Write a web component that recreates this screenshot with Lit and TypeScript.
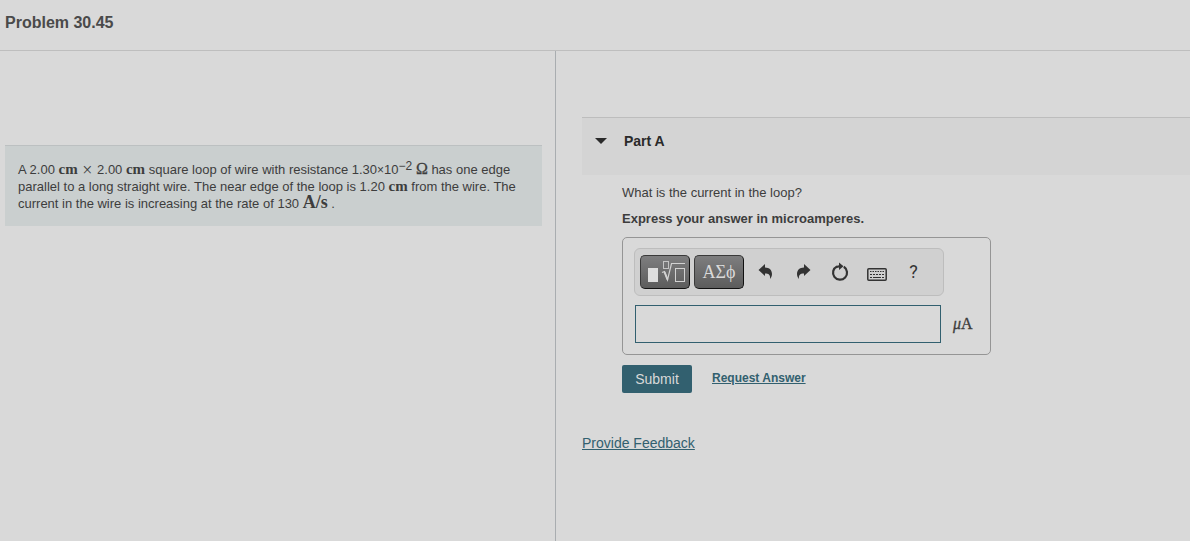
import { LitElement, html, css } from "lit";
import { customElement, state } from "lit/decorators.js";

@customElement("answer-toolbar")
export class AnswerToolbar extends LitElement {
  static styles = css`
    :host {
      display: block;
    }
    .bar {
      display: flex;
      align-items: center;
      box-sizing: border-box;
      width: 310px;
      height: 48px;
      padding: 0 5px;
      border: 1px solid #bdbdbd;
      border-radius: 6px;
      background: #d0d0d0;
    }
    button {
      display: flex;
      align-items: center;
      justify-content: center;
      padding: 0;
      border: 0;
      background: none;
      color: #333;
      cursor: pointer;
    }
    .keys {
      display: flex;
      gap: 4px;
      margin-right: 3px;
    }
    .key {
      box-sizing: border-box;
      width: 50px;
      height: 34px;
      border: 1px solid #111;
      border-top-color: #3a3a3a;
      border-left-color: #3a3a3a;
      border-radius: 5px;
      background: linear-gradient(#7e7e7f, #5c5c5c);
      color: #d9d9d9;
    }
    .greek {
      font: 18px/20px "Liberation Serif", serif;
    }
    .tool {
      width: 37px;
      height: 34px;
    }
    .tools {
      display: flex;
    }
    .help {
      font: 18px/20px Roboto, "Liberation Sans", sans-serif;
    }
  `;

  render() {
    return html`
      <div class="bar" role="toolbar" aria-label="Math input">
        <div class="keys">
          <button class="key" type="button" aria-label="Templates">
            <svg width="40" height="26" viewBox="0 0 40 26" fill="none">
              <rect x="3" y="9" width="10" height="14" fill="#dedede" />
              <rect x="18.500" y="2.500" width="5" height="7" stroke="#c4c4c4" />
              <path d="M17 13.500l2.500-1 3 8.500L26.500 4.500H40" stroke="#d2d2d2" stroke-width="1.200" />
              <path d="M19.500 13l3 7.500" stroke="#d2d2d2" stroke-width="2" />
              <rect x="30.500" y="9.500" width="9" height="13" stroke="#d2d2d2" />
            </svg>
          </button>
          <button class="key greek" type="button" aria-label="Symbols">ΑΣϕ</button>
        </div>
        <div class="tools">
          <button class="tool" type="button" aria-label="Undo">
            <svg width="16" height="18" viewBox="0 0 16 18">
              <path fill="#333" d="M.5 7L7 1v3.500c4.500 0 7 2.800 7 6.500 0 2-.8 3.800-2 5 .5-3.500-.7-5.500-5-5.500V13z" />
            </svg>
          </button>
          <button class="tool" type="button" aria-label="Redo">
            <svg width="16" height="18" viewBox="0 0 16 18">
              <path fill="#333" d="M15.500 7L9 1v3.500c-4.500 0-7 2.800-7 6.500 0 2 .8 3.800 2 5-.5-3.500 .7-5.500 5-5.500V13z" />
            </svg>
          </button>
          <button class="tool" type="button" aria-label="Reset">
            <svg width="18" height="20" viewBox="0 0 18 20" fill="none">
              <path d="M12.800 4.800A7 7 0 1 1 6 4.400" stroke="#333" stroke-width="2.200" />
              <path d="M8 .5l4.500 3.700L8 8V5.500L5.500 6 5 4l3-.8z" fill="#333" />
            </svg>
          </button>
          <button class="tool" type="button" aria-label="Keyboard shortcuts">
            <svg width="20" height="18" viewBox="0 0 20 18" fill="none">
              <rect x=".8" y="5.800" width="18.400" height="11.400" rx="1" stroke="#333" stroke-width="1.500" />
              <path d="M3 8.500h14" stroke="#333" stroke-width="1.200" stroke-dasharray="1.500 1" />
              <path d="M3 11.500h14" stroke="#333" stroke-width="1.200" stroke-dasharray="2 1" />
              <path d="M3 14.500h2M6 14.500h8M15 14.500h2" stroke="#333" stroke-width="1.200" />
            </svg>
          </button>
          <button class="tool help" type="button" aria-label="Help">?</button>
        </div>
      </div>
    `;
  }
}

@customElement("app-root")
export class AppRoot extends LitElement {
  @state() private open = true;

  static styles = css`
    :host {
      display: flex;
      flex-direction: column;
      min-height: 100vh;
      background: #d9d9d9;
      color: #3d3d3d;
      font: 13px/17px "Liberation Sans", Arial, sans-serif;
    }
    h1,
    h2,
    p {
      margin: 0;
    }
    header {
      padding: 13px 5px 17px;
      border-bottom: 1px solid #bebebe;
    }
    h1 {
      font-size: 16px;
      line-height: 20px;
      color: #4a4a4a;
    }
    main {
      display: grid;
      grid-template-columns: 556fr 634fr;
      flex: 1;
    }
    .statement {
      padding: 94px 13px 0 5px;
      border-right: 1px solid #a9adb0;
    }
    .problem {
      padding: 15px 13px 14px;
      border-top: 1px solid #bcc0c1;
      background: #cacfcf;
    }
    .unit,
    .symbol {
      font-family: "Liberation Serif", serif;
      line-height: 0;
    }
    .unit {
      font-size: 15px;
      font-weight: bold;
    }
    .symbol {
      font-size: 16px;
      -webkit-text-stroke: 0.3px;
    }
    .large {
      font-size: 18px;
    }
    .times {
      margin: 0 1px;
      font-family: "Liberation Serif", serif;
      font-size: 18px;
      line-height: 0;
      vertical-align: -2px;
    }
    .small {
      font-size: 12px;
      line-height: 0;
    }
    sup {
      font-size: 12px;
      line-height: 0;
      vertical-align: 4px;
    }
    .work {
      padding: 66px 0 0 26px;
    }
    .part {
      display: flex;
      align-items: center;
      box-sizing: border-box;
      width: 100%;
      height: 58px;
      padding: 0 13px 12px;
      border: 0;
      border-top: 1px solid #bdbdbd;
      background: #d4d4d4;
      cursor: pointer;
    }
    .caret {
      width: 12px;
      height: 6px;
      margin-right: 17px;
    }
    .part h2 {
      font: bold 14px/18px "Liberation Sans", Arial, sans-serif;
      color: #2a2a2a;
    }
    .body {
      padding: 9px 0 0 40px;
    }
    .instruction {
      margin: 9px 0 10px;
      font-weight: bold;
    }
    .answer {
      box-sizing: border-box;
      width: 369px;
      height: 118px;
      padding: 10px 11px;
      border: 1px solid #959595;
      border-radius: 5px;
    }
    .entry {
      display: flex;
      align-items: center;
      gap: 12px;
      padding: 9px 0 0 1px;
    }
    .entry input {
      box-sizing: border-box;
      width: 306px;
      height: 38px;
      padding: 0 8px;
      border: 1px solid #32606f;
      background: transparent;
      font: inherit;
    }
    .actions {
      display: flex;
      align-items: center;
      gap: 20px;
      margin-top: 10px;
    }
    .submit {
      width: 70px;
      height: 28px;
      padding: 0;
      border: 0;
      border-radius: 2px;
      background: #32606f;
      color: #d9d9d9;
      font: 14px/18px "Liberation Sans", Arial, sans-serif;
      cursor: pointer;
    }
    a {
      color: #32606f;
    }
    .request {
      padding-bottom: 2px;
      font-size: 12px;
      font-weight: bold;
    }
    .feedback {
      display: inline-block;
      margin-top: 41px;
      font-size: 14px;
      line-height: 18px;
    }
  `;

  render() {
    return html`
      <header><h1>Problem 30.45</h1></header>
      <main>
        <section class="statement" aria-label="Problem statement">
          <p class="problem">
            A 2.00 <span class="unit">cm</span> <span class="times">×</span> 2.00
            <span class="unit">cm</span> square loop of wire with resistance
            1.30<span class="small">×</span>10<sup>−2</sup> <span class="symbol">Ω</span> has one edge
            parallel to a long straight wire. The near edge of the loop is 1.20
            <span class="unit">cm</span> from the wire. The current in the wire is
            increasing at the rate of 130 <span class="unit large">A/s</span> .
          </p>
        </section>
        <section class="work" aria-label="Answer">
          <button
            class="part"
            type="button"
            aria-expanded=${this.open}
            @click=${() => (this.open = !this.open)}
          >
            <svg class="caret" viewBox="0 0 12 6"><path d="M0 0h12L6 6z" fill="#2a2a2a" /></svg>
            <h2>Part A</h2>
          </button>
          <div class="body" ?hidden=${!this.open}>
            <p>What is the current in the loop?</p>
            <p class="instruction">Express your answer in microamperes.</p>
            <div class="answer">
              <answer-toolbar></answer-toolbar>
              <div class="entry">
                <input id="current" type="text" aria-label="Current in microamperes" />
                <label class="symbol" for="current"><i>μ</i>A</label>
              </div>
            </div>
            <div class="actions">
              <button class="submit" type="button">Submit</button>
              <a class="request" href="#answer">Request Answer</a>
            </div>
          </div>
          <a class="feedback" href="#feedback">Provide Feedback</a>
        </section>
      </main>
    `;
  }
}
